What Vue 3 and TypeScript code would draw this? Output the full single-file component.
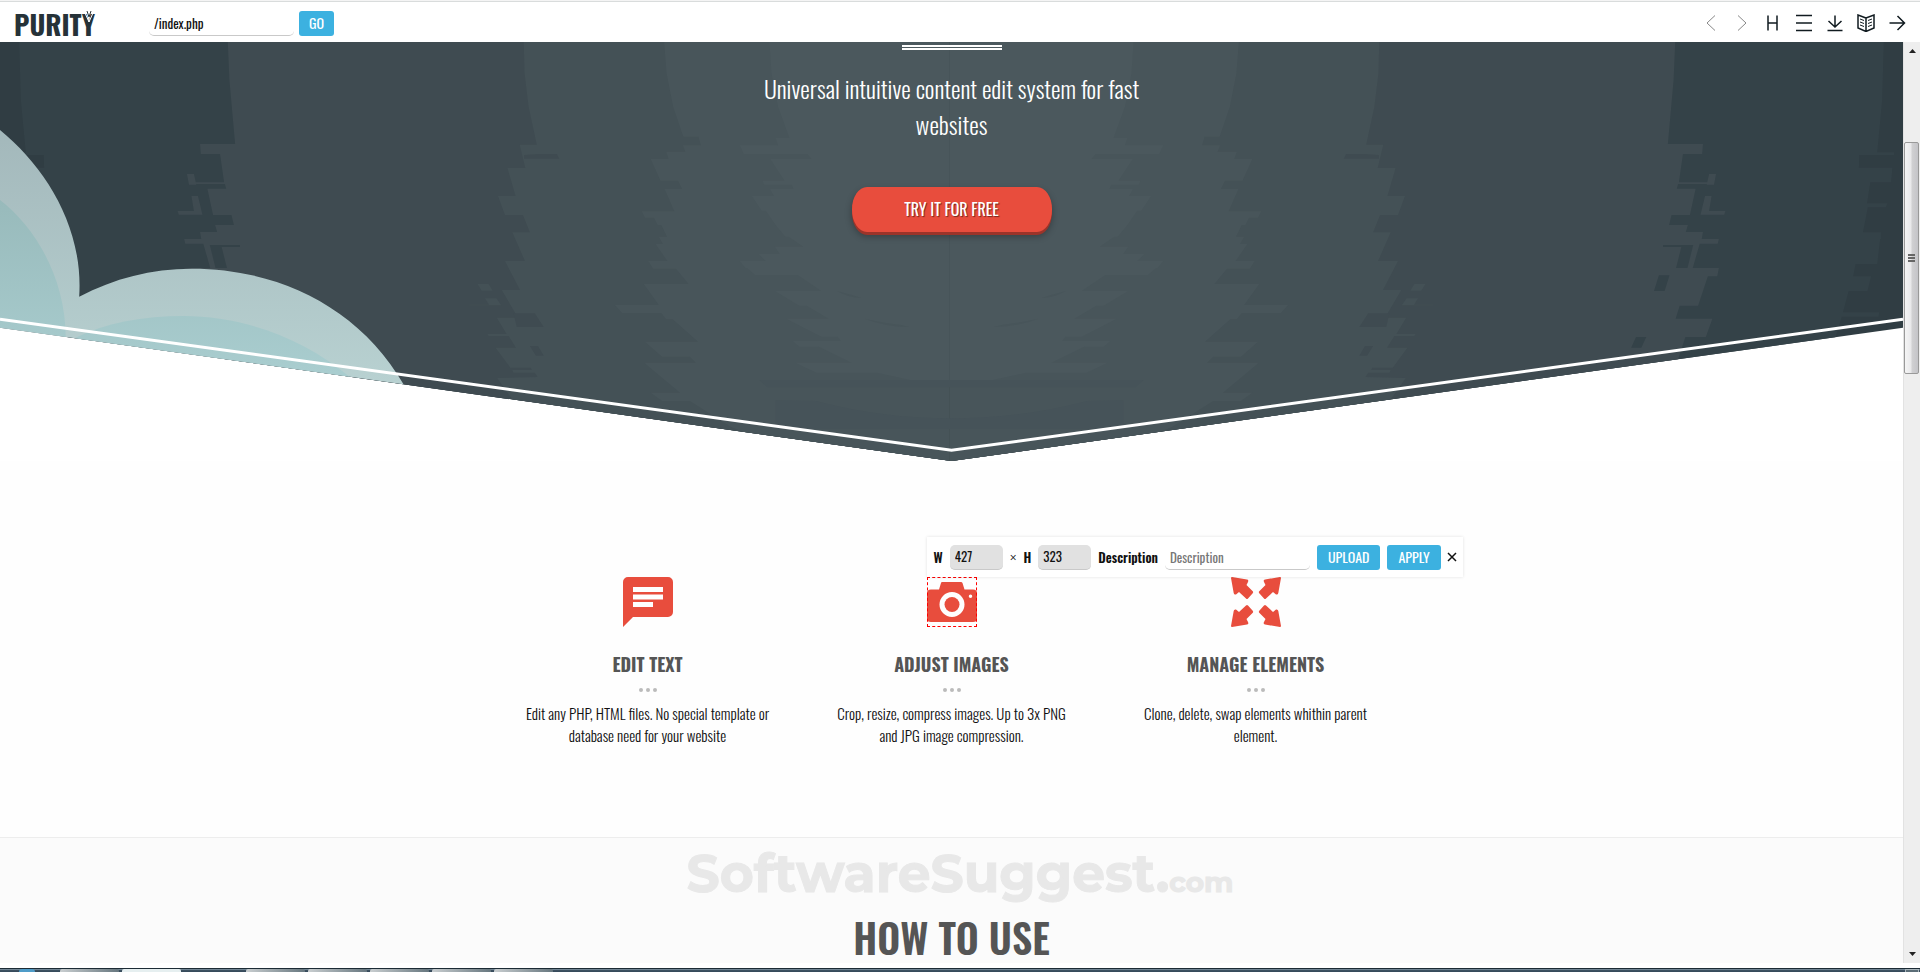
<script setup lang="ts">
import { ref } from 'vue'

type Step = [top: number, bottom: number, xTop: number, xBottom: number]

interface Ring {
  fill: string
  path: string
}

interface Feature {
  icon: 'text' | 'camera' | 'move'
  title: string
  body: string
}

// Halves overlap slightly past the centre so that no seam shows between them.
const MID = 2336
const TOP = 6
const BOTTOM = 1270

// Each ring is a stack of slices; only the left half is listed and the right half is its mirror.
function ring(fill: string, steps: Step[]): Ring {
  const points = steps.map(([top, bottom, a, b]) => `L${a} ${top} L${b} ${bottom}`).join(' ')
  return { fill, path: `M${MID} ${TOP} ${points} L${MID} ${BOTTOM} Z` }
}

const rings: Ring[] = [
  ring('#344248', [
    [6, 180, 47, 51], [180, 337, 51, 63], [337, 345, 22, 22], [345, 383, 107, 108], [383, 427, 26, 29], [427, 490, 80, 88],
    [490, 502, 38, 42], [502, 577, 86, 98], [577, 597, 54, 54], [597, 672, 56, 63], [672, 709, 116, 122],
    [709, 753, 78, 87], [753, 817, 133, 147], [817, 830, 58, 60], [830, 1270, 150, 260],
  ]),
  ring('#3f4b51', [
    [6, 120, 558, 562], [120, 312, 562, 576], [312, 342, 490, 492], [342, 427, 539, 549], [427, 432, 476, 477],
    [432, 446, 551, 554], [446, 525, 508, 522], [525, 555, 567, 573], [555, 576, 527, 532], [576, 597, 490, 493],
    [597, 611, 451, 454], [611, 684, 498, 515], [684, 709, 451, 455], [709, 797, 478, 502], [797, 836, 547, 557],
    [836, 891, 467, 483], [891, 950, 533, 549], [950, 1270, 549, 640],
  ]),
  ring('#445156', [
    [6, 100, 1283, 1285], [100, 200, 1285, 1295], [200, 314, 1295, 1315], [314, 384, 1273, 1287], [384, 468, 1243, 1263],
    [468, 525, 1220, 1237], [525, 577, 1281, 1298], [577, 663, 1255, 1286], [663, 750, 1237, 1274], [750, 833, 1229, 1269],
    [833, 882, 1217, 1241], [882, 888, 1194, 1197], [888, 923, 1246, 1264], [923, 983, 1214, 1250], [983, 990, 1300, 1303],
    [990, 998, 1255, 1258], [998, 1011, 1310, 1317], [1014, 1080, 1218, 1256], [1080, 1270, 1256, 1500],
  ]),
  ring('#48555a', [
    [6, 100, 1627, 1633], [100, 200, 1633, 1649], [200, 290, 1649, 1674], [290, 316, 1711, 1717], [316, 335, 1673, 1679],
    [335, 357, 1632, 1638], [357, 422, 1594, 1618], [422, 447, 1661, 1671], [447, 514, 1628, 1652], [514, 533, 1572, 1580],
    [533, 555, 1602, 1611], [555, 590, 1620, 1634], [590, 612, 1614, 1624], [612, 663, 1606, 1635], [663, 686, 1588, 1600],
    [686, 732, 1656, 1687], [732, 795, 1577, 1614], [795, 819, 1506, 1524], [819, 838, 1620, 1632], [838, 905, 1648, 1710],
    [905, 950, 1580, 1622], [950, 968, 1690, 1705], [968, 1058, 1578, 1666], [1058, 1083, 1594, 1622],
    [1083, 1160, 1690, 1790], [1160, 1270, 1790, 2000],
  ]),
  ring('#4b585d', [
    [6, 100, 1885, 1890], [100, 200, 1890, 1906], [200, 294, 1906, 1934], [294, 316, 1900, 1906], [316, 342, 1812, 1822],
    [342, 357, 1978, 1988], [357, 422, 1887, 1922], [422, 434, 1868, 1872], [434, 447, 1940, 1944], [447, 468, 1886, 1896],
    [468, 512, 1842, 1866], [512, 555, 1876, 1900], [555, 590, 1900, 1924], [590, 620, 1932, 1968], [620, 642, 1898, 1910],
    [642, 663, 1858, 1876], [663, 684, 1812, 1826], [684, 705, 1830, 1850], [705, 753, 1954, 2012], [753, 797, 1898, 1958],
    [797, 836, 1976, 2030], [836, 890, 1926, 2012], [890, 903, 2052, 2060], [903, 920, 1942, 1958], [920, 968, 2006, 2086],
    [968, 998, 1948, 2000], [998, 1020, 2148, 2230], [1020, 1021, 2336, 2336],
  ]),
]

const lightShards: string[] = [
  'M458 402h17l6 32h-18z M469 468h16l11 56h-58l-3-11h40z',
]
const paleShards: string[] = [
  'M1170 732h27l10 20h-27z M1188 775h28l12 21h-78v-2h48z M1178 622l20 48z',
]
const darkShards: string[] = [
  'M514 615h74v6h-45l13 63h-28z M572 706h26l12 47h-26z M629 891h25l12 32h-25z',
]
const midShards: string[] = [
  'M1284 345l36-3h44l6 14h-86z M1258 820h52l22 41h-66z M1298 918h20l14 29h-19z',
]

const features: Feature[] = [
  { icon: 'text', title: 'Edit text', body: 'Edit any PHP, HTML files. No special template or database need for your website' },
  { icon: 'camera', title: 'Adjust images', body: 'Crop, resize, compress images. Up to 3x PNG and JPG image compression.' },
  { icon: 'move', title: 'Manage elements', body: 'Clone, delete, swap elements whithin parent element.' },
]

const filePath = ref('/index.php')
const imageWidth = ref('427')
const imageHeight = ref('323')
const description = ref('')
</script>

<template>
  <div class="app">
    <header class="bar">
      <a class="logo" href="#" aria-label="Purity">
        PURIT<span class="logo-y">Y
          <svg viewBox="0 0 14 16" aria-hidden="true">
            <path class="gap" d="M3 2l4 9M7 2v9M11 2L7 11" />
            <path class="stalk" d="M5 0l2 6M9 0L7 6" />
          </svg>
        </span>
      </a>
      <form class="path-form" @submit.prevent>
        <input v-model="filePath" class="line-input" type="text" aria-label="File path" />
        <button class="btn" type="submit">GO</button>
      </form>
      <nav class="tools" aria-label="Editor tools">
        <button type="button" class="faded" aria-label="Undo">
          <svg viewBox="0 0 18 18"><path d="M13 1.500L5 9l8 7.500" /></svg>
        </button>
        <button type="button" class="faded" aria-label="Redo">
          <svg viewBox="0 0 18 18"><path d="M5 1.500L13 9l-8 7.500" /></svg>
        </button>
        <button type="button" aria-label="Heading">
          <svg viewBox="0 0 18 18"><path d="M4 1.500v15M13 1.500v15M4 9h9" /></svg>
        </button>
        <button type="button" aria-label="Menu">
          <svg viewBox="0 0 18 18"><path d="M1 1.500h16M1 9h16M1 16.500h16" /></svg>
        </button>
        <button type="button" aria-label="Save">
          <svg viewBox="0 0 18 18"><path d="M9 1.500v11M2.500 7L9 13l6.500-6M1.500 16.500h15" /></svg>
        </button>
        <button type="button" aria-label="Manual">
          <svg viewBox="0 0 18 18">
            <path d="M9 4L1 1v13l8 3.500 8-3.500V1L9 4zM9 4v13.500" />
            <path class="thin" d="M3 5l4 1.500M3 8l4 1.500M3 11l4 1.500M15 5l-4 1.500M15 8l-4 1.500M15 11l-4 1.500" />
          </svg>
        </button>
        <button type="button" aria-label="Exit">
          <svg viewBox="0 0 18 18"><path d="M1.500 9h15M9.500 2l7 7-7 7" /></svg>
        </button>
      </nav>
    </header>

    <div class="viewport">
      <main class="page">
        <section class="hero">
          <svg class="hero-art" viewBox="0 6 4662 1257" preserveAspectRatio="none" aria-hidden="true">
            <defs>
              <clipPath id="chevron"><path d="M0 6H4662V863L2331 1263L0 863Z" /></clipPath>
              <linearGradient id="cloud" gradientUnits="userSpaceOnUse" x1="0" y1="270" x2="0" y2="1030">
                <stop offset="0" stop-color="#a3b8bb" />
                <stop offset="1" stop-color="#b8d1d1" />
              </linearGradient>
              <linearGradient id="cloud-core" gradientUnits="userSpaceOnUse" x1="0" y1="480" x2="0" y2="1000">
                <stop offset="0" stop-color="#98babb" />
                <stop offset="1" stop-color="#a9cdcf" />
              </linearGradient>
              <g id="half">
                <path v-for="r in rings.slice(0, 2)" :key="r.fill" :d="r.path" :fill="r.fill" />
                <path v-for="d in lightShards" :key="d" :d="d" fill="#3f4b51" />
                <path v-for="d in darkShards" :key="d" :d="d" fill="#344248" />
                <path v-for="r in rings.slice(2)" :key="r.fill" :d="r.path" :fill="r.fill" />
                <path v-for="d in paleShards" :key="d" :d="d" fill="#445156" />
                <path v-for="d in midShards" :key="d" :d="d" fill="#3f4b51" />
                <path d="M2118 836q50 24 110 25l-20-6q-50-8-90-19z M2050 753q30 20 60 21l-20-8z" fill="#48555a" />
              </g>
            </defs>
            <g clip-path="url(#chevron)">
              <rect y="6" width="4662" height="1257" fill="#303d43" />
              <use href="#half" />
              <use href="#half" transform="translate(4662 0) scale(-1 1)" />
              <path
                fill="#465359"
                d="M1860 1020h942l-20 22h-902z M2000 1083q160 52 331 52t331-52l90-2v86H1900v-86z"
              />
              <path
                fill="url(#cloud)"
                d="M0 270C110 380 205 560 194 770C280 715 370 686 470 686C680 686 880 800 990 1036L990 1100H0Z"
              />
              <path fill="url(#cloud-core)" d="M0 480C85 560 160 710 161 892L0 863Z" />
              <path fill="url(#cloud-core)" d="M185 893C260 848 350 828 450 828C590 828 740 890 858 1012L858 1100H185Z" />
              <path class="edge" d="M0 838L2331 1231L4662 838" />
            </g>
          </svg>
          <div class="hero-text">
            <div class="rule"></div>
            <p>Universal intuitive content edit system for fast websites</p>
            <a class="cta" href="#">TRY IT FOR FREE</a>
          </div>
        </section>

        <section class="features">
          <article v-for="f in features" :key="f.title" class="feature">
            <div class="icon" :class="{ selected: f.icon === 'camera' }">
              <svg v-if="f.icon === 'text'" viewBox="0 0 50 50" aria-hidden="true">
                <path
                  fill-rule="evenodd"
                  d="M5 0H45A5 5 0 0 1 50 5V35A5 5 0 0 1 45 40H10L0 50V5A5 5 0 0 1 5 0ZM10 10V15H40V10ZM10 17.500V22.500H40V17.500ZM10 25V30H30V25Z"
                />
              </svg>
              <svg v-else-if="f.icon === 'camera'" viewBox="0 0 50 50" aria-hidden="true">
                <path
                  fill-rule="evenodd"
                  d="M15 5H34Q35 5 35.500 6L37.500 12.500H46Q50 12.500 50 16V42Q50 45 46 45H4Q0 45 0 42V16Q0 12.500 4 12.500H12L14 6Q14.300 5 15 5ZM25 15A12.500 12.500 0 1 0 25 40A12.500 12.500 0 1 0 25 15ZM43.500 17.500A1.700 1.700 0 1 0 43.500 21A1.700 1.700 0 1 0 43.500 17.500Z"
                />
                <circle cx="25" cy="27.500" r="7.500" />
              </svg>
              <svg v-else viewBox="0 0 50 50" aria-hidden="true">
                <g id="arrow-pair">
                  <path
                    id="arrow"
                    d="M1 0L16 2.500Q18 3 17 5L15.500 8L22 14.500Q22.500 15.500 21.500 16.500L17 21.500Q16 22.500 15 21.500L8 15L5 17.500Q3 18 2.700 16L0 1Q0 0 1 0Z"
                  />
                  <use href="#arrow" transform="translate(50 0) scale(-1 1)" />
                </g>
                <use href="#arrow-pair" transform="translate(0 50) scale(1 -1)" />
              </svg>

              <form v-if="f.icon === 'camera'" class="image-bar" @submit.prevent>
                <label for="img-w">W</label>
                <input id="img-w" v-model="imageWidth" class="size-input" type="text" />
                <span class="times">×</span>
                <label for="img-h">H</label>
                <input id="img-h" v-model="imageHeight" class="size-input" type="text" />
                <label for="img-d">Description</label>
                <input id="img-d" v-model="description" class="line-input" type="text" placeholder="Description" />
                <button class="btn" type="button">UPLOAD</button>
                <button class="btn" type="submit">APPLY</button>
                <button class="close" type="button" aria-label="Close">
                  <svg viewBox="0 0 8 8"><path d="M0 0L8 8M8 0L0 8" /></svg>
                </button>
              </form>
            </div>
            <h3>{{ f.title }}</h3>
            <div class="dots"><i></i><i></i><i></i></div>
            <p>{{ f.body }}</p>
          </article>
        </section>

        <section class="how">
          <p class="watermark">SoftwareSuggest.<small>com</small></p>
          <h2>HOW TO USE</h2>
        </section>
      </main>

      <div class="scroll" aria-hidden="true">
        <svg class="scroll-arrow" viewBox="0 0 7 4"><path d="M0 4L3.500 0L7 4Z" /></svg>
        <div class="track">
          <div class="thumb"><i></i><i></i><i></i></div>
        </div>
        <svg class="scroll-arrow" viewBox="0 0 7 4"><path d="M0 0L3.500 4L7 0Z" /></svg>
      </div>
    </div>

    <footer class="taskbar" aria-hidden="true">
      <span class="orb"></span>
      <span class="task"></span>
      <span class="task active"></span>
      <span class="task apart"></span>
      <span class="task"></span>
      <span class="task"></span>
      <span class="task"></span>
      <span class="task"></span>
      <span class="show-desktop"></span>
    </footer>
  </div>
</template>

<style>
body {
  margin: 0;
  background: #fff;
}
</style>

<style scoped>
* {
  box-sizing: border-box;
}
.app {
  display: flex;
  flex-direction: column;
  min-height: 100vh;
  overflow: hidden;
  font-family: Oswald, 'Roboto Condensed', 'Liberation Sans', sans-serif;
  color: #111;
}
button,
input {
  font: inherit;
  color: inherit;
  border: 0;
  margin: 0;
  padding: 0;
  background: none;
}
svg {
  display: block;
}

.bar {
  display: flex;
  align-items: center;
  height: 42px;
  padding: 0 14px;
  border-top: 1px solid #f4f4f4;
  box-shadow: inset 0 1px 0 #d9dcdc;
}
.logo {
  display: flex;
  width: 135px;
  padding-top: 5px;
  font-size: 27px;
  line-height: 36px;
  font-weight: 700;
  color: #263238;
  text-decoration: none;
}
.logo-y {
  position: relative;
}
.logo-y svg {
  position: absolute;
  top: 5px;
  left: 0;
  width: 14px;
  height: 16px;
  fill: none;
  stroke-width: 1;
}
.logo-y .gap {
  stroke: #fff;
}
.logo-y .stalk {
  stroke: #263238;
}
.path-form {
  display: flex;
  align-items: center;
  gap: 5px;
  padding-top: 3px;
}
.line-input {
  width: 145px;
  height: 25px;
  padding: 0 5px;
  border-bottom: 1px solid #c9c9c9;
  border-radius: 5px;
  font-size: 13px;
  line-height: 24px;
}
.line-input::placeholder {
  color: #777;
  opacity: 1;
}
.btn {
  height: 25px;
  padding: 0 10px;
  border-radius: 3px;
  background: #3cb1e0;
  color: #fff;
  font-size: 14px;
  line-height: 24px;
}
.tools {
  display: flex;
  gap: 13px;
  margin-left: auto;
  padding-top: 3px;
}
.tools svg {
  width: 18px;
  height: 18px;
  fill: none;
  stroke: #111b20;
  stroke-width: 1.5;
}
.tools .thin {
  stroke-width: 1;
}
.tools .faded svg {
  stroke: #888;
  stroke-width: 1;
}

.viewport {
  display: flex;
  flex: 1;
}
.page {
  flex: 1;
  display: flex;
  flex-direction: column;
  min-width: 0;
}
.hero {
  position: relative;
  padding: 3px 0 226px;
}
.hero-art {
  position: absolute;
  inset: 0;
  width: 100%;
  height: 100%;
}
.edge {
  fill: none;
  stroke: #fff;
  stroke-width: 3;
  vector-effect: non-scaling-stroke;
}
.hero-text {
  position: relative;
  display: flex;
  flex-direction: column;
  align-items: center;
  text-align: center;
  color: #fff;
}
.rule {
  width: 100px;
  height: 5px;
  border: solid #fff;
  border-width: 2px 0;
}
.hero-text p {
  max-width: 440px;
  margin: 20px 0 45px;
  font-size: 24px;
  line-height: 36px;
  font-weight: 300;
}
.cta {
  width: 200px;
  height: 45px;
  margin-bottom: 3px;
  border-radius: 15px / 22px;
  background: #e84d3d;
  box-shadow: 0 3px 0 #9b342a, 0 4px 6px 1px rgba(0, 0, 0, 0.25);
  color: #fff;
  font-size: 16px;
  line-height: 45px;
  text-decoration: none;
  text-shadow: 1px 1px 1px rgba(0, 0, 0, 0.5);
}

.features {
  display: flex;
  justify-content: center;
  padding: 116px 0 91px;
  background: #fefefe;
}
.feature {
  display: flex;
  flex-direction: column;
  align-items: center;
  width: 304px;
  padding: 0 28px;
  text-align: center;
}
.icon {
  position: relative;
  width: 50px;
  height: 50px;
}
.icon > svg {
  width: 50px;
  height: 50px;
  fill: #e84d3d;
}
.selected {
  outline: 1px dashed #f00;
  outline-offset: -1px;
}
.feature h3 {
  margin: 22px 0 9px;
  font-size: 18px;
  line-height: 30px;
  font-weight: 700;
  color: #555;
  text-transform: uppercase;
}
.dots {
  display: flex;
  gap: 3px;
}
.dots i {
  width: 4px;
  height: 4px;
  border-radius: 50%;
  background: #bbb;
}
.feature p {
  margin: 10px 0 0;
  font-size: 15px;
  line-height: 22px;
  font-weight: 300;
}

.image-bar {
  position: absolute;
  z-index: 2;
  left: 0;
  bottom: 100%;
  display: flex;
  align-items: center;
  gap: 7px;
  height: 40px;
  padding: 0 7px;
  background: #fff;
  box-shadow: 0 0 3px rgba(0, 0, 0, 0.12);
  font-size: 13px;
  line-height: 25px;
}
.image-bar label {
  font-weight: 600;
}
.image-bar .btn {
  padding: 0 11px;
}
.times {
  font-family: 'Open Sans', sans-serif;
  font-size: 12px;
}
.size-input {
  width: 53px;
  height: 25px;
  padding: 0 5px;
  border-bottom: 1px solid #c9c9c9;
  border-radius: 5px;
  background: #e1e1e1;
}
.close svg {
  width: 8px;
  height: 8px;
  overflow: visible;
  stroke: #111;
  stroke-width: 1.5;
}

.how {
  flex: 1;
  padding-top: 6px;
  border-top: 1px solid #ededed;
  background: #fbfbfb;
  text-align: center;
}
.watermark {
  margin: 0 0 8px;
  padding-left: 17px;
  font-family: Montserrat, 'Open Sans', sans-serif;
  font-size: 52px;
  line-height: 60px;
  font-weight: 700;
  color: #e8e8e8;
  -webkit-text-stroke: 1px #e8e8e8;
}
.watermark small {
  font-size: 28px;
  line-height: 28px;
}
.how h2 {
  margin: 0;
  font-size: 40px;
  line-height: 50px;
  font-weight: 600;
  color: #555;
}

.scroll {
  display: flex;
  flex-direction: column;
  align-items: center;
  width: 17px;
  padding: 7px 0;
  border-left: 1px solid #e2e2e2;
  background: #eee;
}
.scroll-arrow {
  width: 7px;
  height: 4px;
  fill: #222;
}
.track {
  flex: 1;
  width: 100%;
  padding-top: 89px;
}
.thumb {
  display: flex;
  flex-direction: column;
  align-items: center;
  justify-content: center;
  gap: 1px;
  width: 15px;
  height: 232px;
  border: 1px solid #999;
  border-radius: 2px;
  background: linear-gradient(90deg, #f5f5f5, #e9e9eb 45%, #d0d0d2 55%, #c4c4c8);
}
.thumb i {
  width: 7px;
  height: 2px;
  background: #666;
}

.taskbar {
  display: flex;
  height: 4px;
  margin-top: 5px;
  padding-right: 1px;
  border-top: 1px solid #1c2b35;
  background: linear-gradient(#8ba0ae, #3c5060 50%, #34495a);
}
.orb {
  width: 16px;
  margin: 0 25px 0 19px;
  border-radius: 8px 8px 0 0;
  background: #4f9cc8;
}
.task {
  width: 59px;
  margin-right: 3px;
  border-radius: 2px 2px 0 0;
  background: linear-gradient(90deg, #c9ced0, #67777f);
}
.task.active {
  background: #e6eff0;
}
.task.apart {
  margin-left: 62px;
}
.show-desktop {
  width: 14px;
  margin-left: auto;
  border: 1px solid #a9b5bb;
  border-bottom: 0;
  background: #5b6d77;
}
</style>
